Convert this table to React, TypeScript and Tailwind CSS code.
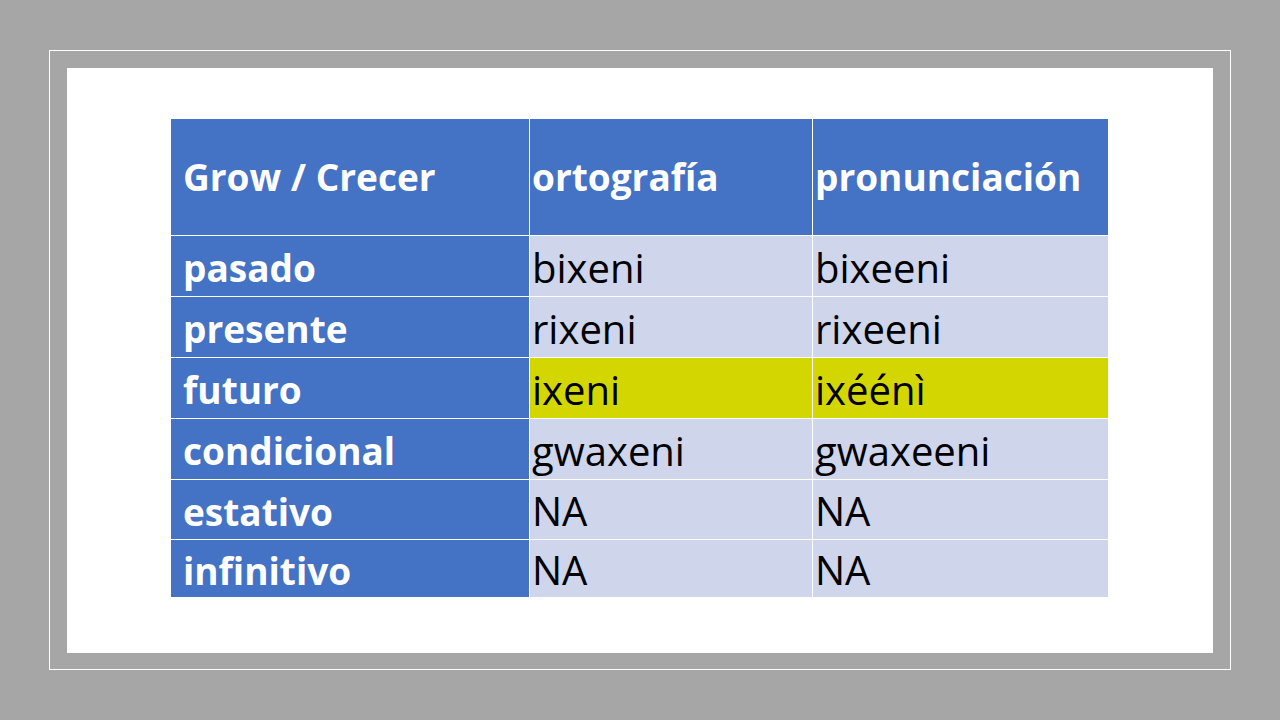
const rows = [
  { label: "pasado", orto: "bixeni", pron: "bixeeni" },
  { label: "presente", orto: "rixeni", pron: "rixeeni" },
  { label: "futuro", orto: "ixeni", pron: "ixéénì", hl: true },
  { label: "condicional", orto: "gwaxeni", pron: "gwaxeeni" },
  { label: "estativo", orto: "NA", pron: "NA" },
  { label: "infinitivo", orto: "NA", pron: "NA" },
];

export default function App() {
  return (
    <div
      className="flex h-[720px] w-[1280px] items-center justify-center bg-[#a6a6a6]"
      style={{ fontFamily: "'Open Sans', sans-serif" }}
    >
      <div className="flex h-[620px] w-[1182px] items-center justify-center border border-white">
        <div className="flex h-[585px] w-[1146px] bg-white pl-[104px] pt-[51px]">
          <div className="grid h-[478px] w-[937px] grid-cols-[358px_282px_295px] grid-rows-[116px_60px_60px_60px_60px_59px_57px] gap-px self-start overflow-hidden bg-white leading-none">
            <div className="flex items-center bg-[#4472c4] pl-3 text-[37px] font-bold text-white">
              Grow / Crecer
            </div>
            <div className="flex items-center bg-[#4472c4] pl-0.5 text-[37px] font-bold text-white">
              ortografía
            </div>
            <div className="flex items-center bg-[#4472c4] pl-0.5 text-[37px] font-bold text-white">
              pronunciación
            </div>
            {rows.map((r) => (
              <>
                <div
                  key={r.label}
                  className="flex items-center bg-[#4472c4] pl-3 pt-1 text-[37px] font-bold text-white"
                >
                  {r.label}
                </div>
                <div
                  className={`flex items-center pl-0.5 pt-1 text-[40px] text-black ${
                    r.hl ? "bg-[#d4d600]" : "bg-[#cfd5ea]"
                  }`}
                >
                  {r.orto}
                </div>
                <div
                  className={`flex items-center pl-0.5 pt-1 text-[40px] text-black ${
                    r.hl ? "bg-[#d4d600]" : "bg-[#cfd5ea]"
                  }`}
                >
                  {r.pron}
                </div>
              </>
            ))}
          </div>
        </div>
      </div>
    </div>
  );
}
